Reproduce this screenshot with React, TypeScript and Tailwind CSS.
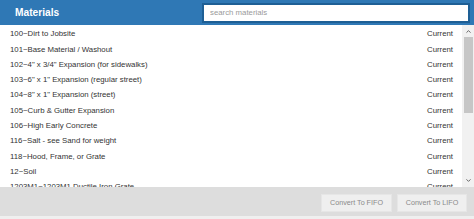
import { ChevronUp, ChevronDown } from "lucide-react"

const materials = [
  "100~Dirt to Jobsite",
  "101~Base Material / Washout",
  "102~4\" x 3/4\" Expansion (for sidewalks)",
  "103~6\" x 1\" Expansion (regular street)",
  "104~8\" x 1\" Expansion (street)",
  "105~Curb & Gutter Expansion",
  "106~High Early Concrete",
  "116~Salt - see Sand for weight",
  "118~Hood, Frame, or Grate",
  "12~Soil",
  "1203M1~1203M1 Ductile Iron Grate",
]

export default function App() {
  return (
    <div
      className="w-[474px] h-[219px] flex flex-col bg-white overflow-hidden"
      style={{ fontFamily: '"Liberation Sans", Arial, sans-serif' }}
    >
      {/* header */}
      <div className="h-[25px] shrink-0 bg-[#2f78b5] flex items-center justify-between pl-[15px] pr-[4px]">
        <h2 className="text-[10.2px] font-bold text-white">Materials</h2>
        <input
          className="w-[268px] h-[20px] bg-white border-2 border-[#1e5f95] px-[6px] text-[7.8px] text-[#333] placeholder:text-[#9a9a9a] outline-none"
          placeholder="search materials"
        />
      </div>

      {/* list + scrollbar */}
      <div className="flex-1 flex min-h-0">
        <div className="flex-1 overflow-hidden pt-[1.5px]">
          {materials.map((m) => (
            <div
              key={m}
              className="h-[15.3px] flex items-center justify-between pl-[10px] pr-[9px] text-[7.8px] text-[#333]"
            >
              <span>{m}</span>
              <span>Current</span>
            </div>
          ))}
        </div>
        <div className="w-[12px] bg-[#f1f1f1] flex flex-col items-center">
          <ChevronUp className="w-[7px] h-[7px] mt-[3px] text-[#555]" strokeWidth={3} />
          <div className="w-[9px] h-[76px] mt-[2px] bg-[#c6c6c6]" />
          <div className="flex-1" />
          <ChevronDown className="w-[7px] h-[7px] mb-[3px] text-[#555]" strokeWidth={3} />
        </div>
      </div>

      {/* footer */}
      <div className="h-[32px] shrink-0 bg-[#dddddd] border-b-[3px] border-[#efefef] flex items-start justify-end gap-[5px] pt-[7px] pr-[7px]">
        <button className="w-[71px] h-[18px] bg-[#efefef] border border-[#e6e6e6] text-[7.2px] text-[#8a8a8a]">
          Convert To FIFO
        </button>
        <button className="w-[70px] h-[18px] bg-[#efefef] border border-[#e6e6e6] text-[7.2px] text-[#8a8a8a]">
          Convert To LIFO
        </button>
      </div>
    </div>
  )
}
